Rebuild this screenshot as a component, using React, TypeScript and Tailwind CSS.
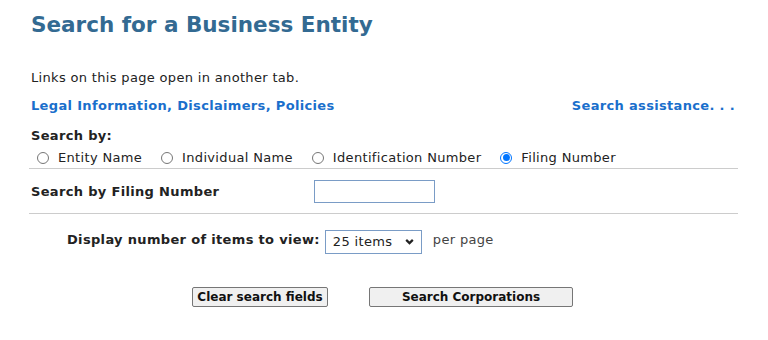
import React from "react";

function Radio({ checked }: { checked?: boolean }) {
  return checked ? (
    <span className="inline-flex h-[12px] w-[12px] items-center justify-center rounded-full border border-[#0075ff] bg-white">
      <span className="h-[7px] w-[7px] rounded-full bg-[#0075ff]" />
    </span>
  ) : (
    <span className="inline-block h-[12px] w-[12px] rounded-full border border-[#767676] bg-white" />
  );
}

export default function App() {
  const f = { fontFamily: '"DejaVu Sans", Verdana, sans-serif' };
  return (
    <div className="h-[340px] w-[768px] bg-white text-[13px] tracking-[0.33px] text-[#222]" style={f}>
      <div className="ml-[29px] w-[709px]">
        <h1 className="flex h-[48px] items-center pl-[2px] pt-[3px] text-[21.5px] font-bold tracking-normal text-[#336a92]">
          Search for a Business Entity
        </h1>
        <div className="flex h-[42px] items-end pb-[3px] pl-[2px]">Links on this page open in another tab.</div>
        <div className="flex h-[29px] items-center justify-between pl-[2px] pr-[3px] pt-[2px] font-bold text-[#1a6fcc]">
          <span>Legal Information, Disclaimers, Policies</span>
          <span>Search assistance. . .</span>
        </div>
        <div className="flex h-[28px] items-end pb-[2px] pl-[2px] font-bold">Search by:</div>
        <div className="flex h-[22px] items-center border-b border-[#cccccc] pl-[8px]">
          <label className="flex items-center gap-[9px]">
            <Radio />
            <span>Entity Name</span>
          </label>
          <label className="ml-[19px] flex items-center gap-[9px]">
            <Radio />
            <span>Individual Name</span>
          </label>
          <label className="ml-[19px] flex items-center gap-[9px]">
            <Radio />
            <span>Identification Number</span>
          </label>
          <label className="ml-[19px] flex items-center gap-[9px]">
            <Radio checked />
            <span>Filing Number</span>
          </label>
        </div>
        <div className="flex h-[45px] items-center border-b border-[#cccccc] pl-[2px] pt-[1px]">
          <span className="w-[283px] font-bold">Search by Filing Number</span>
          <span className="mb-[1px] inline-block h-[23px] w-[121px] border border-[#7a9cc6] bg-white" />
        </div>
        <div className="flex h-[51px] items-center pl-[38px]">
          <span className="font-bold">Display number of items to view:</span>
          <span className="ml-[5px] mt-[4px] flex h-[24px] w-[97px] items-center justify-between border border-[#7a9cc6] bg-white pl-[7px] pr-[6px]">
            <span>25 items</span>
            <svg width="11" height="11" viewBox="0 0 10 10">
              <path d="M2 3.5 L5 6.5 L8 3.5" fill="none" stroke="#222" strokeWidth="2" />
            </svg>
          </span>
          <span className="ml-[11px] text-[#444]">per page</span>
        </div>
        <div className="flex h-[60px] items-center pl-[163px] pt-[3px]">
          <button className="h-[20px] w-[136px] whitespace-nowrap rounded-[2px] border border-[#767676] bg-[#f0f0f0] px-0 text-[12px] font-bold tracking-normal text-[#111]" style={f}>
            Clear search fields
          </button>
          <button className="ml-[41px] h-[20px] w-[204px] whitespace-nowrap rounded-[2px] border border-[#767676] bg-[#f0f0f0] px-0 text-[12px] font-bold tracking-normal text-[#111]" style={f}>
            Search Corporations
          </button>
        </div>
      </div>
    </div>
  );
}
